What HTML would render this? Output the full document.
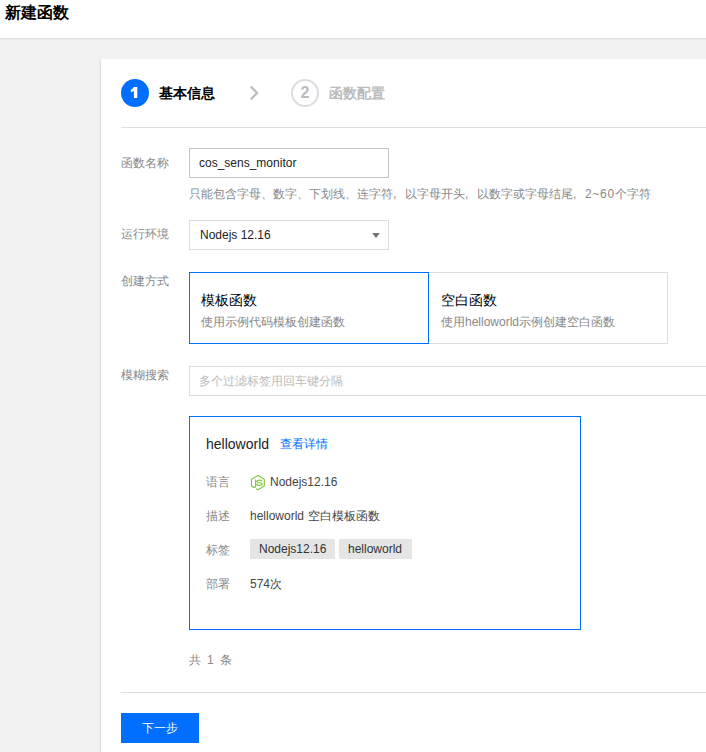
<!DOCTYPE html>
<html><head><meta charset="utf-8">
<style>
*{margin:0;padding:0;box-sizing:border-box}
html,body{width:706px;height:752px;overflow:hidden;background:#f2f2f2;font-family:"Liberation Sans",sans-serif;font-size:12px;color:#000}
.a{position:absolute;white-space:nowrap}
#hdr{position:absolute;left:0;top:0;width:706px;height:38px;background:#fff}
#hdrline{position:absolute;left:0;top:38px;width:706px;height:1px;background:#dedede}
#hdrsh{position:absolute;left:0;top:39px;width:706px;height:1px;background:#ececec}
#title{left:5px;top:1px;font-size:16px;font-weight:bold;line-height:24px}
#panel{position:absolute;left:101px;top:59px;width:700px;height:700px;background:#fff;box-shadow:-1px 1px 2px rgba(0,0,0,0.10)}
#pshadow{position:absolute;left:100px;top:59px;width:1px;height:700px;background:#e3e3e3}
.circle{position:absolute;width:28px;height:28px;border-radius:50%;text-align:center;font-weight:bold;font-size:16px;line-height:28px}
.c1{left:121px;top:79px;background:#006eff;color:#fff}
.c2{left:291px;top:79px;border:2px solid #ddd;color:#bbb;line-height:24px}
.step{font-size:14px;font-weight:bold;line-height:20px}
.sep{position:absolute;height:1px;background:#dddddd}
.lbl{color:#888;line-height:16px}
.box{position:absolute;border:1px solid #ddd;background:#fff}
.blue{color:#006eff}
.tag{position:absolute;top:539px;height:20px;background:#e5e5e5;color:#333;line-height:20px;padding-left:9px}
</style></head><body>
<div id="hdr"></div>
<div id="hdrline"></div>
<div id="hdrsh"></div>
<div class="a" id="title">新建函数</div>

<div id="panel"></div>

<div class="circle c1"></div>
<svg class="a" style="left:118px;top:76px" width="40" height="34" viewBox="118 76 40 34"><path d="M133.8 87 H137.3 V97.9 H133.9 V90.9 Q132.4 91.7 130.8 92 V89.7 Q132.7 89 133.8 87 Z" fill="#fff"/></svg>
<div class="a step" style="left:159px;top:83px">基本信息</div>
<svg class="a" style="left:246px;top:84px" width="16" height="18" viewBox="0 0 16 18"><path d="M4.8 2.6 L11 9 L4.8 15.4" fill="none" stroke="#bbb" stroke-width="2.2"/></svg>
<div class="circle c2">2</div>
<div class="a step" style="left:329px;top:83px;color:#bbb">函数配置</div>
<div class="sep" style="left:121px;top:127px;width:600px"></div>

<div class="a lbl" style="left:121px;top:155px">函数名称</div>
<div class="box" style="left:189px;top:148px;width:200px;height:30px;border-color:#c6c6c6"></div>
<div class="a" style="left:199px;top:155px;line-height:16px;color:#222">cos_sens_monitor</div>
<div class="a lbl" style="left:189px;top:186px">只能包含字母、数字、下划线、连字符<span style="display:inline-block;width:12px">,</span>以字母开头<span style="display:inline-block;width:12px">,</span>以数字或字母结尾<span style="display:inline-block;width:12px">,</span><span style="letter-spacing:0.7px">2~60</span>个字符</div>

<div class="a lbl" style="left:121px;top:226px">运行环境</div>
<div class="box" style="left:189px;top:220px;width:200px;height:30px"></div>
<div class="a" style="left:200px;top:227px;line-height:16px;color:#222">Nodejs 12.16</div>
<svg class="a" style="left:372px;top:233px" width="8" height="5" viewBox="0 0 8 5"><path d="M0 0 H8 L4 5 Z" fill="#777"/></svg>

<div class="a lbl" style="left:121px;top:273px">创建方式</div>
<div class="box" style="left:428px;top:272px;width:240px;height:72px"></div>
<div class="box" style="left:189px;top:272px;width:240px;height:72px;border-color:#006eff;background:transparent"></div>
<div class="a" style="left:201px;top:290px;font-size:14px;line-height:20px">模板函数</div>
<div class="a lbl" style="left:201px;top:314px">使用示例代码模板创建函数</div>
<div class="a" style="left:441px;top:290px;font-size:14px;line-height:20px">空白函数</div>
<div class="a lbl" style="left:441px;top:314px">使用helloworld示例创建空白函数</div>

<div class="a lbl" style="left:121px;top:367px">模糊搜索</div>
<div class="box" style="left:189px;top:366px;width:600px;height:30px"></div>
<div class="a" style="left:199px;top:373px;line-height:16px;color:#bbb">多个过滤标签用回车键分隔</div>

<div class="box" style="left:189px;top:416px;width:392px;height:214px;border-color:#006eff"></div>
<div class="a" style="left:206px;top:434px;font-size:14px;line-height:20px;color:#222">helloworld</div>
<div class="a blue" style="left:280px;top:436px;line-height:16px">查看详情</div>

<div class="a lbl" style="left:206px;top:474px">语言</div>
<svg class="a" style="left:248px;top:472px" width="20" height="21" viewBox="248 472 20 21"><g fill="none" stroke="#80c844" stroke-width="1.15" stroke-linejoin="round" stroke-linecap="round">
<path d="M256.4 488.9 L257.9 489.8 L264.3 486.1 V479.2 L257.9 475.6 L251.5 479.2 V486.1 L253.2 487.1"/>
<path d="M255.6 480.1 V486.2 Q255.6 487.9 253.2 487.1"/>
<path d="M261.9 481 Q261.4 480.1 259.3 480.1 Q256.9 480.1 256.9 481.4 Q256.9 482.6 259.4 482.7 Q262.2 482.8 262.2 484 Q262.2 485.3 259.3 485.3 Q257 485.3 256.5 484.4"/></g></svg>
<div class="a" style="left:270px;top:474px;line-height:16px;color:#444">Nodejs12.16</div>

<div class="a lbl" style="left:206px;top:508px">描述</div>
<div class="a" style="left:250px;top:508px;line-height:16px;color:#444;word-spacing:1px">helloworld 空白模板函数</div>

<div class="a lbl" style="left:206px;top:542px">标签</div>
<div class="tag" style="left:250px;width:85px">Nodejs12.16</div>
<div class="tag" style="left:339px;width:73px">helloworld</div>

<div class="a lbl" style="left:206px;top:576px">部署</div>
<div class="a" style="left:250px;top:576px;line-height:16px;color:#444">574次</div>

<div class="a lbl" style="left:189px;top:652px">共</div><div class="a lbl" style="left:207px;top:652px">1</div><div class="a lbl" style="left:220px;top:652px">条</div>
<div class="sep" style="left:121px;top:692px;width:600px"></div>
<div class="a" style="left:121px;top:713px;width:78px;height:30px;background:#006eff;color:#fff;text-align:center;line-height:30px">下一步</div>
</body></html>
